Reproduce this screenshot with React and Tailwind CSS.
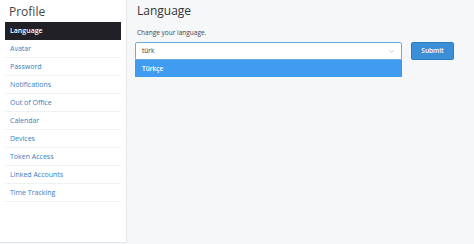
import { ChevronDown } from "lucide-react";

const items = [
	"Avatar",
	"Password",
	"Notifications",
	"Out of Office",
	"Calendar",
	"Devices",
	"Token Access",
	"Linked Accounts",
	"Time Tracking",
];

export default function App() {
	return (
		<div
			className="flex h-[244px] w-[474px] overflow-hidden bg-[#f6f7f9] text-[#333]"
			style={{ fontFamily: '"Open Sans", "Noto Sans", sans-serif' }}
		>
			{/* sidebar */}
			<aside className="flex h-[243px] w-[127px] shrink-0 flex-col border-r border-b border-[#e4e6ea] bg-white">
				<h2 className="h-[22px] pl-[9px] pt-[4px] text-[12px] leading-[15px] text-[#444]">Profile</h2>
				<div className="mx-[5px] flex h-[18px] items-center bg-[#202026] pl-[5px] text-[7px] font-semibold text-white">
					Language
				</div>
				<ul className="mx-[5px]">
					{items.map(item => (
						<li
							key={item}
							className="flex h-[18px] items-center border-b border-[#f0f1f3] pl-[5px] pt-[1px] text-[7px] text-[#2d7fc4]"
						>
							{item}
						</li>
					))}
				</ul>
			</aside>

			{/* main */}
			<main className="flex-1 pl-[8px] pt-[3px]">
				<h1 className="h-[18px] pl-[2px] text-[12px] leading-[15px] text-[#333]">Language</h1>
				<p className="mt-[7px] pl-[2px] text-[6.5px] leading-[9px] text-[#444]">Change your language.</p>
				<div className="mt-[5px] flex items-start gap-[9px]">
					<div className="w-[267px]">
						<div className="flex h-[18px] items-center justify-between rounded-t-[2px] border border-[#6ea9e0] bg-white px-[6px] text-[6.5px] text-[#333]">
							<span>türk</span>
							<ChevronDown className="h-[7px] w-[7px] text-[#999]" strokeWidth={2} />
						</div>
						<div className="flex h-[17px] items-center bg-[#3f9cf0] pl-[7px] text-[6.5px] font-semibold text-white">
							Türkçe
						</div>
					</div>
					<button
						type="button"
						className="flex h-[18px] w-[43px] items-center justify-center rounded-[2px] border border-[#2c7cc2] bg-[#3b8fd7] text-[6.5px] font-semibold text-white"
					>
						Submit
					</button>
				</div>
			</main>
		</div>
	);
}
